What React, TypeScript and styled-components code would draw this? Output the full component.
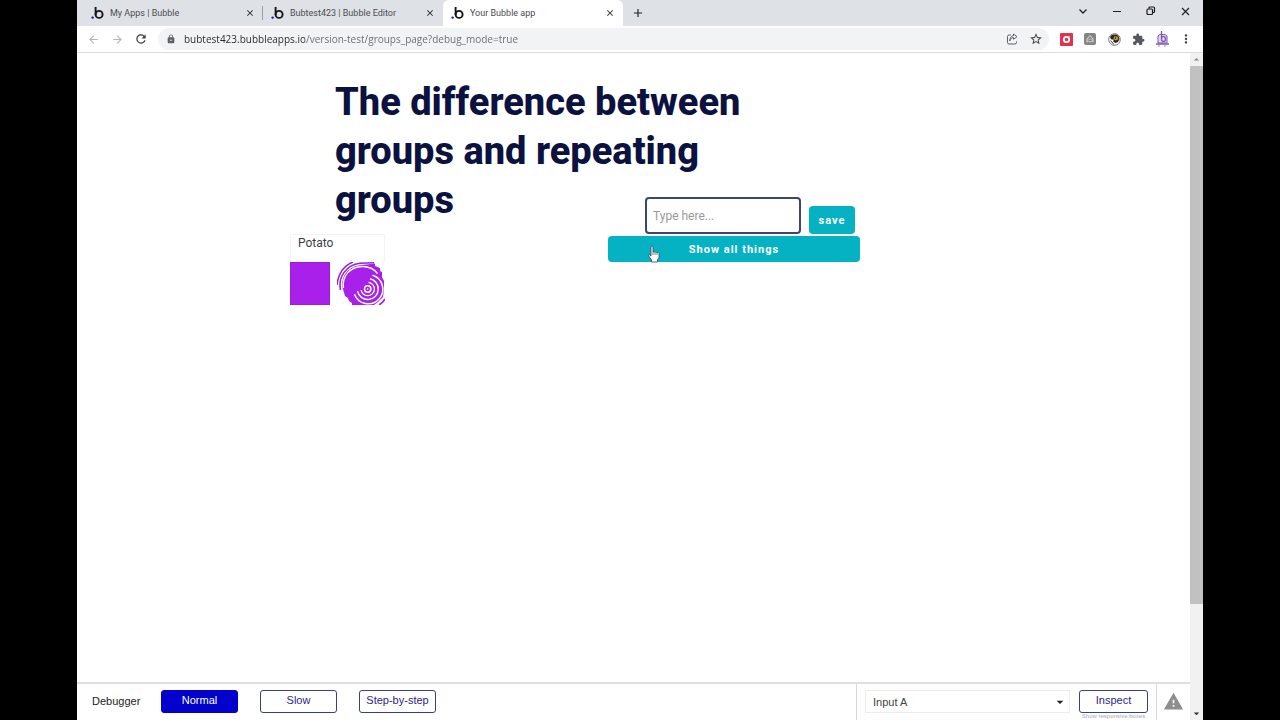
import React from "react";
import styled, { createGlobalStyle, css } from "styled-components";
import {
  MdAdd,
  MdArrowBack,
  MdArrowDropDown,
  MdArrowDropUp,
  MdArrowForward,
  MdClose,
  MdExtension,
  MdLock,
  MdMoreVert,
  MdRefresh,
  MdStarBorder,
  MdWarning,
} from "react-icons/md";

const chromeFont = '"Open Sans", "Noto Sans", sans-serif';
const tabFont = 'Roboto, "Open Sans", sans-serif';
const pageFont = 'Roboto, "Liberation Sans", sans-serif';
const debugFont = '"Liberation Sans", Arial, sans-serif';

const GlobalStyle = createGlobalStyle`
  * { box-sizing: border-box; }
  body { margin: 0; background: #000; }
  button, input, select { font: inherit; margin: 0; }
  button { border: 0; padding: 0; background: none; cursor: pointer; }
  svg { display: block; flex: none; }
`;

const Stage = styled.div`
  display: flex;
  min-height: 100vh;
  padding: 0 77px;
  background: #000;
`;

const BrowserWindow = styled.div`
  display: flex;
  flex: 1;
  flex-direction: column;
  min-width: 0;
  background: #fff;
`;

const TabStrip = styled.header`
  display: flex;
  align-items: stretch;
  height: 26px;
  padding-left: 6px;
  background: #dee1e6;
  font-family: ${tabFont};
`;

const Tab = styled.div<{ $active?: boolean; $divided?: boolean }>`
  position: relative;
  display: flex;
  flex: 0 1 180px;
  align-items: center;
  min-width: 0;
  padding: 0 8px;
  border-radius: 6px 6px 0 0;
  color: #4a4d51;
  ${(p) => p.$active && css`background: #fff;`}
  ${(p) =>
    p.$divided &&
    css`
      &::after {
        content: "";
        position: absolute;
        right: 0;
        top: 6px;
        width: 1px;
        height: 14px;
        background: #9a9da1;
      }
    `}
`;

const TabTitle = styled.button`
  display: flex;
  flex: 1;
  align-items: center;
  gap: 6px;
  min-width: 0;
  color: inherit;
  font-size: 9px;
  line-height: 16px;
  white-space: nowrap;
`;

const IconButton = styled.button<{ $size?: number; $faded?: boolean }>`
  display: flex;
  flex: none;
  align-items: center;
  justify-content: center;
  width: ${(p) => p.$size ?? 14}px;
  height: ${(p) => p.$size ?? 14}px;
  color: ${(p) => (p.$faded ? "#b4b6b9" : "#3c4043")};
`;

const NewTab = styled(IconButton)`
  align-self: center;
  margin-left: 7px;
  color: #222;
`;

const WindowControls = styled.div`
  display: flex;
  align-items: center;
  gap: 20px;
  margin-left: auto;
  padding: 0 11px 4px 0;
`;

const Toolbar = styled.nav`
  display: flex;
  align-items: center;
  gap: 10px;
  height: 27px;
  padding: 0 10px 0 9px;
  border-bottom: 1px solid #dcdddf;
  background: #fff;
  font-family: ${chromeFont};
`;

const AddressBar = styled.label`
  display: flex;
  flex: 1;
  align-items: center;
  height: 22px;
  min-width: 0;
  padding: 0 6px 0 8px;
  border-radius: 11px;
  background: #f1f3f4;
  color: #5f6368;
`;

const AddressInput = styled.input`
  flex: 1;
  min-width: 0;
  margin-left: 8px;
  padding: 0;
  border: 0;
  outline: 0;
  background: linear-gradient(90deg, #25272a 121px, #676b70 121px);
  background-clip: text;
  color: transparent;
  font-size: 10px;
  line-height: 18px;
`;

const AddressActions = styled.div`
  display: flex;
  gap: 10px;
`;

const Extensions = styled.div`
  display: flex;
  align-items: center;
  gap: 10px;
`;

const Viewport = styled.div`
  display: flex;
  flex: 1;
`;

const Page = styled.div`
  display: flex;
  flex: 1;
  flex-direction: column;
  min-width: 0;
`;

const Canvas = styled.main`
  display: grid;
  flex: 1;
  grid-template-columns: 318px 252px;
  grid-template-rows: 120px 37px auto;
  align-content: start;
  padding: 24px 0 0 213px;
  font-family: ${pageFont};
`;

const Heading = styled.h1`
  grid-area: 1 / 1 / 3 / 3;
  max-width: 470px;
  margin: 0;
  padding: 1px 0 0 45px;
  color: #0b1240;
  font-size: 38px;
  font-weight: 800;
  line-height: 49px;
`;

const EntryForm = styled.form`
  display: flex;
  grid-area: 2 / 2 / 4 / 3;
  flex-direction: column;
  gap: 2px;
`;

const EntryRow = styled.div`
  display: flex;
  align-items: flex-end;
  gap: 8px;
  padding: 0 5px 0 37px;
`;

const EntryInput = styled.input`
  flex: 1;
  min-width: 0;
  height: 37px;
  padding: 0 6px;
  border: 2px solid #3f4573;
  border-radius: 4px;
  background: #fff;
  font-size: 12px;
  &::placeholder {
    color: #9a9a9a;
    opacity: 1;
  }
`;

const ActionButton = styled.button<{ $width?: number }>`
  position: relative;
  width: ${(p) => (p.$width ? `${p.$width}px` : "100%")};
  height: ${(p) => (p.$width ? 28 : 26)}px;
  padding-top: 2px;
  border-radius: 4px;
  background: #05b2c4;
  color: #fff;
  font-size: 11px;
  font-weight: 700;
  letter-spacing: 1px;
  line-height: 24px;
`;

const HandPointer = styled.svg`
  position: absolute;
  top: 9px;
  left: 40px;
`;

const ItemGroup = styled.section`
  grid-area: 3 / 1 / 4 / 2;
  width: 95px;
`;

const ItemName = styled.p`
  height: 28px;
  margin: 0;
  padding: 0 7px;
  border: 1px solid #f4f4f4;
  border-bottom: 0;
  color: #3d3d3d;
  font-size: 12px;
  line-height: 17px;
`;

const Shapes = styled.div`
  display: flex;
  gap: 7px;
`;

const Swatch = styled.div`
  width: 40px;
  height: 43px;
  border: 1px solid #9a20d0;
  background: #a820ea;
`;

const DebugBar = styled.footer`
  display: flex;
  height: 38px;
  border-top: 2px solid #dedede;
  font-family: ${debugFont};
  font-size: 11px;
`;

const DebugModes = styled.div`
  display: flex;
  flex: 1;
  align-items: center;
  gap: 22px;
  padding: 0 0 2px 15px;
  color: #222;
`;

const DebugLabel = styled.span`
  width: 47px;
  white-space: nowrap;
`;

const DebugButton = styled.button<{ $filled?: boolean; $width: number }>`
  width: ${(p) => p.$width}px;
  height: 23px;
  border: 1px solid ${(p) => (p.$filled ? "#0202c4" : "#3c3c8c")};
  border-radius: 3px;
  padding-bottom: 2px;
  background: ${(p) => (p.$filled ? "#0202cc" : "#fff")};
  color: ${(p) => (p.$filled ? "#fff" : "#28288c")};
  line-height: 19px;
  white-space: nowrap;
`;

const Inspector = styled.div`
  display: flex;
  align-items: flex-start;
  gap: 9px;
  padding: 6px 8px 0;
  border-left: 1px solid #d8d8d8;
`;

const ElementPicker = styled.div`
  position: relative;
  width: 205px;
  color: #222;
  svg {
    position: absolute;
    top: 4px;
    right: 2px;
    pointer-events: none;
  }
`;

const PickerSelect = styled.select`
  width: 100%;
  height: 23px;
  padding: 0 7px;
  border: 1px solid #ececec;
  border-radius: 0;
  appearance: none;
  background: #fff;
  color: #444;
`;

const InspectColumn = styled.div`
  display: flex;
  flex-direction: column;
  align-items: center;
`;

const ResponsiveLink = styled.a`
  color: #a4a8b4;
  font-size: 6px;
  line-height: 7px;
  text-decoration: none;
`;

const IssuesButton = styled.button`
  display: flex;
  align-items: center;
  justify-content: center;
  width: 34px;
  padding-bottom: 2px;
  border-left: 1px solid #d8d8d8;
  color: #8e8e8e;
`;

const ScrollTrack = styled.div`
  display: flex;
  flex-direction: column;
  align-items: center;
  justify-content: space-between;
  width: 13px;
  background: #f1f1f1;
  color: #303030;
`;

const ScrollArrow = styled.div`
  display: flex;
  align-items: center;
  justify-content: center;
  height: 13px;
`;

const ScrollRail = styled.div`
  flex: 1;
  width: 100%;
`;

const ScrollThumb = styled.div`
  height: 84%;
  background: #c1c1c1;
`;

const BubbleLogo = () => (
  <svg width="13" height="14" viewBox="0 0 13 14" aria-hidden="true">
    <path d="M4.600 1v8" stroke="#14151a" strokeWidth="1.900" fill="none" />
    <circle cx="8.100" cy="8.400" r="3.500" stroke="#14151a" strokeWidth="1.900" fill="none" />
    <circle cx="1.600" cy="11.600" r="1.200" fill="#1111b8" />
  </svg>
);

const ShareIcon = () => (
  <svg width="12" height="12" viewBox="0 0 12 12" fill="none" stroke="#5f6368" strokeLinejoin="round" aria-hidden="true">
    <path d="M5 2H3a1.500 1.500 0 0 0-1.500 1.500v6A1.500 1.500 0 0 0 3 11h6a1.500 1.500 0 0 0 1.500-1.500V8.300" />
    <path d="M3.800 8c.2-2.300 1.500-3.300 3.700-3.400V6.300L11 3.700 7.500 1v1.700C5 3 3.800 5 3.800 8z" />
  </svg>
);

const RestoreIcon = () => (
  <svg width="10" height="10" viewBox="0 0 10 10" fill="none" stroke="#1c1c1c" strokeWidth="1.200" aria-hidden="true">
    <rect x="1" y="3" width="5.500" height="5.500" rx="1" />
    <path d="M3 2.800V2a1 1 0 0 1 1-1h3.500a1 1 0 0 1 1 1v3.500a1 1 0 0 1-1 1h-.8" />
  </svg>
);

const RecorderIcon = () => (
  <svg width="13" height="13" viewBox="0 0 13 13" aria-hidden="true">
    <rect width="13" height="13" rx="1" fill="#df3450" />
    <circle cx="6.500" cy="6.500" r="2.700" fill="none" stroke="#fff" strokeWidth="1.800" />
    <path d="M8.500 3.500l1.200-.5-.3 1.600z" fill="#fff" />
  </svg>
);

const GhostIcon = () => (
  <svg width="12" height="12" viewBox="0 0 12 12" aria-hidden="true">
    <rect width="12" height="12" rx="2" fill="#858585" />
    <path d="M3 9V6l3-3.500L9 6v3L7.500 8.200 6 9 4.500 8.200z" fill="none" stroke="#dedede" />
    <path d="M5 5.500V7M7 5.500V7" stroke="#dedede" strokeWidth=".8" />
  </svg>
);

const BeeIcon = () => (
  <svg width="13" height="13" viewBox="0 0 13 13" aria-hidden="true">
    <circle cx="6.500" cy="6.500" r="5.800" fill="#fafafa" stroke="#77797d" />
    <path d="M2 4C3.500 1 8 .8 10.500 3l1 3L10 9 7.500 10 5 8.500l1-1.700-3-.6z" fill="#29261f" />
    <path d="M6.200 3.200l3.300.2 1 2.600-2.500 1.500-2.600-1.600z" fill="#cf9a37" />
    <path d="M2.500 7.500l3.500 4" stroke="#34435f" />
    <circle cx="7.500" cy="5" r=".8" fill="#222" />
  </svg>
);

const ProfileIcon = () => (
  <svg width="13" height="16" viewBox="0 0 13 16" fill="none" stroke="#7f55b6" aria-hidden="true">
    <path d="M2 12V5l2-1.500h5L11 5v7z" fill="#e4daf3" />
    <path d="M5.500 0v8.500c0 3 4 2.500 4-.5S6 5 5.500 7.500" strokeWidth="1.300" />
    <path d="M0 13h13" strokeWidth="1.500" />
    <path d="M2 15h2M8 15h2" strokeWidth=".7" />
  </svg>
);

const Ripple = () => (
  <svg width="48" height="43" viewBox="0 0 48 43" fill="none" aria-hidden="true">
    <path d="M6 27C3 14 12 3.500 25 3l13-1.500L38 4l5 2v3l2 1v5l2 4v9l-1 7-5 5-4 3H15v-2l-3-2-1-3-3-2z" fill="#a820ea" />
    <path d="M0 23C1 13 6 4 16 0M3.500 28C1 15 9 3 23 1.200L37 .8" stroke="#9a24d2" strokeWidth="1.600" />
    <path d="M6.500 26C5 14 13 5 25 4.500c7-.2 12 2.500 15.500 7" stroke="#fff" strokeWidth="1.300" />
    <circle cx="30.700" cy="27" r="3.200" stroke="#fff" strokeWidth="1.500" />
    <circle cx="30.700" cy="27" r=".8" fill="#fff" />
    <path d="M31.500 20.300a6.700 6.700 0 1 1-7.400 7.700" stroke="#fff" strokeWidth="1.300" />
    <path d="M33 16.800a10.500 10.500 0 1 1-12.500 12.400" stroke="#fff" strokeWidth="1.400" />
    <path d="M35.500 13.200a14.600 14.600 0 1 1-18 19" stroke="#fff" strokeWidth="1.500" />
    <path d="M48 37a19 19 0 0 1-6 6" stroke="#9a24d2" strokeWidth="1.600" />
  </svg>
);

const tabs = [
  { title: "My Apps | Bubble", divided: true },
  { title: "Bubtest423 | Bubble Editor" },
  { title: "Your Bubble app", active: true },
];

export default function App() {
  return (
    <Stage>
      <GlobalStyle />
      <BrowserWindow>
        <TabStrip>
          {tabs.map((tab) => (
            <Tab key={tab.title} $active={tab.active} $divided={tab.divided}>
              <TabTitle type="button">
                <BubbleLogo />
                {tab.title}
              </TabTitle>
              <IconButton type="button" $size={10} aria-label={`Close ${tab.title}`}>
                <MdClose size={10} color="#222" />
              </IconButton>
            </Tab>
          ))}
          <NewTab type="button" $size={16} aria-label="New tab">
            <MdAdd size={14} />
          </NewTab>
          <WindowControls>
            <IconButton type="button" aria-label="Search tabs">
              <svg width="10" height="10" viewBox="0 0 10 10" fill="none" stroke="#222" strokeWidth="1.300">
                <path d="M1.500 3.500L5 7l3.500-3.500" />
              </svg>
            </IconButton>
            <IconButton type="button" aria-label="Minimize">
              <svg width="8" height="8" viewBox="0 0 8 8" stroke="#222">
                <path d="M0 4.500h8" />
              </svg>
            </IconButton>
            <IconButton type="button" aria-label="Restore">
              <RestoreIcon />
            </IconButton>
            <IconButton type="button" aria-label="Close window">
              <svg width="9" height="9" viewBox="0 0 9 9" stroke="#222" strokeWidth="1.200">
                <path d="M1 1l7 7M8 1L1 8" />
              </svg>
            </IconButton>
          </WindowControls>
        </TabStrip>

        <Toolbar>
          <IconButton type="button" $faded aria-label="Back">
            <MdArrowBack size={13} />
          </IconButton>
          <IconButton type="button" $faded aria-label="Forward">
            <MdArrowForward size={13} />
          </IconButton>
          <IconButton type="button" aria-label="Reload">
            <MdRefresh size={14} />
          </IconButton>
          <AddressBar>
            <MdLock size={10} />
            <AddressInput
              aria-label="Address"
              defaultValue="bubtest423.bubbleapps.io/version-test/groups_page?debug_mode=true"
            />
            <AddressActions>
              <IconButton type="button" aria-label="Share">
                <ShareIcon />
              </IconButton>
              <IconButton type="button" aria-label="Bookmark">
                <MdStarBorder size={14} />
              </IconButton>
            </AddressActions>
          </AddressBar>
          <Extensions>
            <IconButton type="button" aria-label="Recorder">
              <RecorderIcon />
            </IconButton>
            <IconButton type="button" aria-label="Ghost">
              <GhostIcon />
            </IconButton>
            <IconButton type="button" aria-label="Bee">
              <BeeIcon />
            </IconButton>
            <IconButton type="button" aria-label="Extensions">
              <MdExtension size={13} color="#55585c" />
            </IconButton>
            <IconButton type="button" aria-label="Profile">
              <ProfileIcon />
            </IconButton>
            <IconButton type="button" aria-label="Menu">
              <MdMoreVert size={14} />
            </IconButton>
          </Extensions>
        </Toolbar>

        <Viewport>
          <Page>
            <Canvas>
              <Heading>The difference between groups and repeating groups</Heading>
              <EntryForm onSubmit={(e) => e.preventDefault()}>
                <EntryRow>
                  <EntryInput aria-label="Thing name" placeholder="Type here..." />
                  <ActionButton type="submit" $width={46}>
                    save
                  </ActionButton>
                </EntryRow>
                <ActionButton type="button">
                  Show all things
                  <HandPointer width="12" height="18" viewBox="0 0 12 18" aria-hidden="true">
                    <path
                      d="M3 2a1 1 0 0 1 2 0v5l1-.5 1 .8 1-.5 1 .9 1-.3 1 1v4L9.500 15v2h-6v-2L.8 11C0 9.500 1.500 9 3 11z"
                      fill="#fff"
                      stroke="#36474d"
                      strokeWidth=".8"
                    />
                    <path d="M5 7v3M7 7.500V10M9 8v2" stroke="#36474d" strokeWidth=".7" />
                  </HandPointer>
                </ActionButton>
              </EntryForm>
              <ItemGroup>
                <ItemName>Potato</ItemName>
                <Shapes>
                  <Swatch />
                  <Ripple />
                </Shapes>
              </ItemGroup>
            </Canvas>

            <DebugBar>
              <DebugModes>
                <DebugLabel>Debugger</DebugLabel>
                <DebugButton type="button" $filled $width={77}>
                  Normal
                </DebugButton>
                <DebugButton type="button" $width={77}>
                  Slow
                </DebugButton>
                <DebugButton type="button" $width={77}>
                  Step-by-step
                </DebugButton>
              </DebugModes>
              <Inspector>
                <ElementPicker>
                  <PickerSelect aria-label="Element" defaultValue="Input A">
                    <option>Input A</option>
                  </PickerSelect>
                  <MdArrowDropDown size={16} />
                </ElementPicker>
                <InspectColumn>
                  <DebugButton type="button" $width={69}>
                    Inspect
                  </DebugButton>
                  <ResponsiveLink href="#responsive">Show responsive boxes</ResponsiveLink>
                </InspectColumn>
              </Inspector>
              <IssuesButton type="button" aria-label="Issues">
                <MdWarning size={21} />
              </IssuesButton>
            </DebugBar>
          </Page>
          <ScrollTrack aria-hidden="true">
            <ScrollArrow>
              <MdArrowDropUp size={13} color="#8a8a8a" />
            </ScrollArrow>
            <ScrollRail>
              <ScrollThumb />
            </ScrollRail>
            <ScrollArrow>
              <MdArrowDropDown size={13} />
            </ScrollArrow>
          </ScrollTrack>
        </Viewport>
      </BrowserWindow>
    </Stage>
  );
}
